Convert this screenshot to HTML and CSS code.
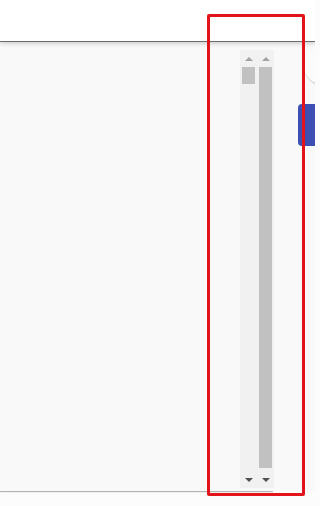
FILE: index.html
```html
<!DOCTYPE html>
<html>
<head>
<meta charset="utf-8">
<link rel="stylesheet" href="styles.css">
</head>
<body>
<div class="header"></div>
<div class="main">
  <div class="content"></div>
  <div class="scrolls">
    <div class="sb">
      <div class="arrow"><span class="tri up"></span></div>
      <div class="thumb small"></div>
      <div class="fill"></div>
      <div class="arrow"><span class="tri down"></span></div>
    </div>
    <div class="sb">
      <div class="arrow"><span class="tri up"></span></div>
      <div class="thumb big"></div>
      <div class="fill"></div>
      <div class="arrow"><span class="tri down"></span></div>
    </div>
  </div>
  <div class="side">
    <div class="circle"></div>
    <div class="blue"></div>
  </div>
</div>
<div class="footer"></div>
<div class="highlight"></div>
</body>
</html>
```
FILE: styles.css
```css
html, body {
  margin: 0;
  padding: 0;
}
body {
  width: 315px;
  height: 506px;
  overflow: hidden;
  position: relative;
  background: #fcfcfc;
  font-family: "Liberation Sans", Arial, sans-serif;
}
.header {
  height: 42px;
  box-sizing: border-box;
  background: #ffffff;
  border-bottom: 1px solid #6e6e6e;
  box-shadow: 0 1px 5px rgba(0, 0, 0, 0.22);
  position: relative;
  z-index: 1;
}
.main {
  display: flex;
  height: 449px;
  box-sizing: border-box;
  padding-top: 8px;
  background: #f9f9f9;
}
.content {
  flex: 0 0 240px;
}
.scrolls {
  display: flex;
  width: 34px;
  height: 438px;
  background: #f1f1f1;
}
.sb {
  width: 17px;
  display: flex;
  flex-direction: column;
}
.arrow {
  height: 17px;
  flex: 0 0 17px;
  display: flex;
  align-items: center;
  justify-content: center;
}
.tri {
  width: 0;
  height: 0;
  border-left: 4px solid transparent;
  border-right: 4px solid transparent;
}
.tri.up {
  border-bottom: 4px solid #a3a3a3;
}
.tri.down {
  border-top: 4px solid #505050;
}
.thumb {
  margin: 0 2px;
  background: #c1c1c1;
}
.thumb.small {
  height: 17px;
}
.thumb.big {
  height: 401px;
}
.fill {
  flex: 1;
}
.side {
  flex: 1;
  min-width: 0;
  position: relative;
  overflow: hidden;
  padding-left: 24px;
}
.circle {
  position: absolute;
  left: 30px;
  top: -2px;
  width: 36px;
  height: 36px;
  border-radius: 50%;
  background: #fbfbfb;
  box-shadow: 0 2px 2px -1px rgba(0, 0, 0, 0.22);
}
.blue {
  margin-top: 54px;
  width: 17px;
  height: 42px;
  border-radius: 4px 0 0 4px;
  background: #3d4fb3;
}
.footer {
  width: 273px;
  border-top: 1px solid #b2b2b2;
  box-shadow: 0 1px 1px rgba(0, 0, 0, 0.06);
}
.highlight {
  position: absolute;
  left: 207px;
  top: 14px;
  width: 98px;
  height: 482px;
  box-sizing: border-box;
  border: 3px solid #e3131b;
  border-radius: 2px;
  z-index: 5;
}
```
